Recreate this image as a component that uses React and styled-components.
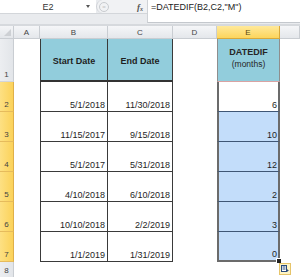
import React from "react";
import styled, { createGlobalStyle } from "styled-components";

const GlobalStyle = createGlobalStyle`
  html, body {
    margin: 0;
    padding: 0;
    background: #fff;
    overflow: hidden;
  }
  body {
    font-family: "Liberation Sans", Arial, sans-serif;
  }
`;

const Page = styled.div`
  width: 300px;
  height: 277px;
  overflow: hidden;
  background: #fff;
`;

/* formula bar */

const FormulaBar = styled.div`
  display: flex;
  height: 24px;
  background: #e9ebee;
`;

const NameArea = styled.div`
  width: 147px;
  display: flex;
  flex-direction: column;
`;

const NameRow = styled.div`
  display: flex;
  height: 13px;
  border-bottom: 1px solid #d3d6da;
`;

const NameBox = styled.div`
  width: 96px;
  display: flex;
  align-items: center;
  justify-content: center;
  position: relative;
  background: #fff;
  font-size: 9px;
  color: #333;
  .arrow {
    position: absolute;
    right: 6px;
    top: 5px;
    width: 0;
    height: 0;
    border-left: 2.5px solid transparent;
    border-right: 2.5px solid transparent;
    border-top: 3px solid #555;
  }
`;

const Capsule = styled.div`
  flex: 1;
  display: flex;
  align-items: center;
  justify-content: space-between;
  padding: 0 4px 0 2px;
  background: #f1f2f4;
  border-left: 1px solid #cfd2d6;
  border-top-left-radius: 7px;
  border-bottom-left-radius: 7px;
  .knob {
    width: 8px;
    height: 8px;
    border-radius: 50%;
    border: 1px solid #c8cbcf;
    font-size: 6px;
    line-height: 8px;
    text-align: center;
    color: #c5c5c5;
  }
`;

const Fx = styled.span`
  font-family: "Liberation Serif", serif;
  font-style: italic;
  font-weight: bold;
  font-size: 9px;
  color: #555;
  sub {
    font-size: 6px;
    vertical-align: -1px;
  }
`;

const FormulaBox = styled.div`
  flex: 1;
  height: 23px;
  background: #fff;
  border-left: 1px solid #cfd2d6;
  border-bottom: 1px solid #c4c8cd;
  padding: 2px 0 0 3px;
  box-sizing: border-box;
  font-size: 9px;
  color: #222;
`;

/* sheet grid */

const Sheet = styled.div`
  display: grid;
  grid-template-columns: 14px 26px 68px 65px 44px 63px 1fr;
  grid-template-rows: 13px 43px repeat(6, 30px) 16px;
  border-top: 2px solid #d6d9dd;
  font-size: 9px;
  color: #222;
`;

const Corner = styled.div`
  background: linear-gradient(#f4f5f7, #e3e6ea);
  border-right: 1px solid #c9cdd2;
  border-bottom: 1px solid #c9cdd2;
  position: relative;
  &::after {
    content: "";
    position: absolute;
    right: 2px;
    bottom: 2px;
    border-left: 7px solid transparent;
    border-bottom: 7px solid #cdd0d4;
  }
`;

const ColHead = styled.div`
  display: flex;
  align-items: center;
  justify-content: center;
  font-size: 8px;
  color: ${(p) => (p.$selected ? "#5a4a10" : "#444")};
  background: ${(p) =>
    p.$selected
      ? "linear-gradient(#ffe99a, #fcd55c)"
      : "linear-gradient(#f5f6f8, #e4e7eb)"};
  border-right: 1px solid ${(p) => (p.$selected ? "#d9a93a" : "#c9cdd2")};
  border-bottom: 1px solid ${(p) => (p.$selected ? "#d9a93a" : "#c9cdd2")};
`;

const RowHead = styled.div`
  display: flex;
  align-items: flex-end;
  justify-content: center;
  padding-bottom: 2px;
  box-sizing: border-box;
  font-size: 8px;
  color: #444;
  background: ${(p) =>
    p.$selected
      ? "linear-gradient(90deg, #fde083, #fbd25a)"
      : "linear-gradient(90deg, #eceef1, #e2e5e9)"};
  border-right: 1px solid ${(p) => (p.$selected ? "#dfb04a" : "#c9cdd2")};
  border-bottom: 1px solid ${(p) => (p.$selected ? "#e6bb5c" : "#d2d5da")};
`;

const Blank = styled.div`
  background: #fff;
`;

const HeadCell = styled.div`
  display: flex;
  align-items: center;
  justify-content: center;
  padding-top: 2px;
  box-sizing: border-box;
  background: #92cddc;
  font-weight: bold;
  color: #1e1e1e;
  border-left: ${(p) => (p.$first ? "1px solid #3a3a3a" : "none")};
  border-right: 1px solid #3a3a3a;
  border-bottom: 2px solid #333;
`;

const DateCell = styled.div`
  display: flex;
  align-items: flex-end;
  justify-content: flex-end;
  padding: 0 2px 1px 0;
  box-sizing: border-box;
  background: #fff;
  color: #1e1e1e;
  border-left: ${(p) => (p.$first ? "1px solid #3a3a3a" : "none")};
  border-right: 1px solid #3a3a3a;
  border-bottom: 1px solid #3a3a3a;
`;

const ResultHead = styled.div`
  display: flex;
  flex-direction: column;
  align-items: center;
  justify-content: center;
  padding-bottom: 4px;
  box-sizing: border-box;
  background: #92cddc;
  color: #262626;
  line-height: 12px;
  border-left: 1px solid #8e8e8e;
  border-right: 1px solid #8e8e8e;
  border-bottom: 1px solid #d9a3a3;
  b {
    font-weight: bold;
  }
  span {
    font-size: 8.5px;
  }
`;

const ResultCell = styled.div`
  position: relative;
  display: flex;
  align-items: flex-end;
  justify-content: flex-end;
  padding: 0 1px 1px 0;
  box-sizing: border-box;
  background: ${(p) => (p.$active ? "#fff" : "#c3ddfa")};
  color: #1e1e1e;
  border-left: 2px solid #6b6b6b;
  border-right: 2px solid #6b6b6b;
  border-bottom: ${(p) =>
    p.$last ? "2px solid #6b6b6b" : "1px solid #3f5675"};
`;

const FillHandle = styled.div`
  position: absolute;
  right: -4px;
  bottom: -4px;
  width: 4px;
  height: 4px;
  background: #222;
  border: 1px solid #fff;
`;

const PasteTag = styled.div`
  position: absolute;
  right: -13px;
  bottom: -15px;
  width: 10px;
  height: 10px;
  background: #fff5c4;
  border: 1px solid #e6c46a;
  display: flex;
  align-items: center;
  justify-content: center;
  z-index: 2;
`;

const rows = [
  ["5/1/2018", "11/30/2018", 6],
  ["11/15/2017", "9/15/2018", 10],
  ["5/1/2017", "5/31/2018", 12],
  ["4/10/2018", "6/10/2018", 2],
  ["10/10/2018", "2/2/2019", 3],
  ["1/1/2019", "1/31/2019", 0],
];

const letters = ["A", "B", "C", "D", "E"];

const PasteIcon = () => (
  <svg width="8" height="8" viewBox="0 0 8 8">
    <rect x="0.5" y="0.5" width="5" height="6" fill="#fff" stroke="#2b4b7c" />
    <rect x="1.5" y="1.5" width="3" height="1" fill="#2b4b7c" />
    <rect x="1.5" y="3.5" width="3" height="1" fill="#2b4b7c" />
    <path d="M5.5 5.5h2M6.5 4.5v2" stroke="#2b4b7c" strokeWidth="1" />
  </svg>
);

const App = () => {
  return (
    <Page>
      <GlobalStyle />
      <FormulaBar>
        <NameArea>
          <NameRow>
            <NameBox>
              E2
              <span className="arrow" />
            </NameBox>
            <Capsule>
              <span className="knob">=</span>
              <Fx>
                f<sub>x</sub>
              </Fx>
            </Capsule>
          </NameRow>
        </NameArea>
        <FormulaBox>=DATEDIF(B2,C2,"M")</FormulaBox>
      </FormulaBar>

      <Sheet>
        <Corner />
        {letters.map((l) => (
          <ColHead key={l} $selected={l === "E"}>
            {l}
          </ColHead>
        ))}
        <ColHead />

        <RowHead>1</RowHead>
        <Blank />
        <HeadCell $first>Start Date</HeadCell>
        <HeadCell>End Date</HeadCell>
        <Blank />
        <ResultHead>
          <b>DATEDIF</b>
          <span>(months)</span>
        </ResultHead>
        <Blank />

        {rows.map(([start, end, months], i) => (
          <React.Fragment key={i}>
            <RowHead $selected>{i + 2}</RowHead>
            <Blank />
            <DateCell $first>{start}</DateCell>
            <DateCell>{end}</DateCell>
            <Blank />
            <ResultCell $active={i === 0} $last={i === rows.length - 1}>
              {months}
              {i === rows.length - 1 && (
                <>
                  <FillHandle />
                  <PasteTag>
                    <PasteIcon />
                  </PasteTag>
                </>
              )}
            </ResultCell>
            <Blank />
          </React.Fragment>
        ))}

        <RowHead>8</RowHead>
        <Blank />
        <Blank />
        <Blank />
        <Blank />
        <Blank />
        <Blank />
      </Sheet>
    </Page>
  );
};

export default App;
